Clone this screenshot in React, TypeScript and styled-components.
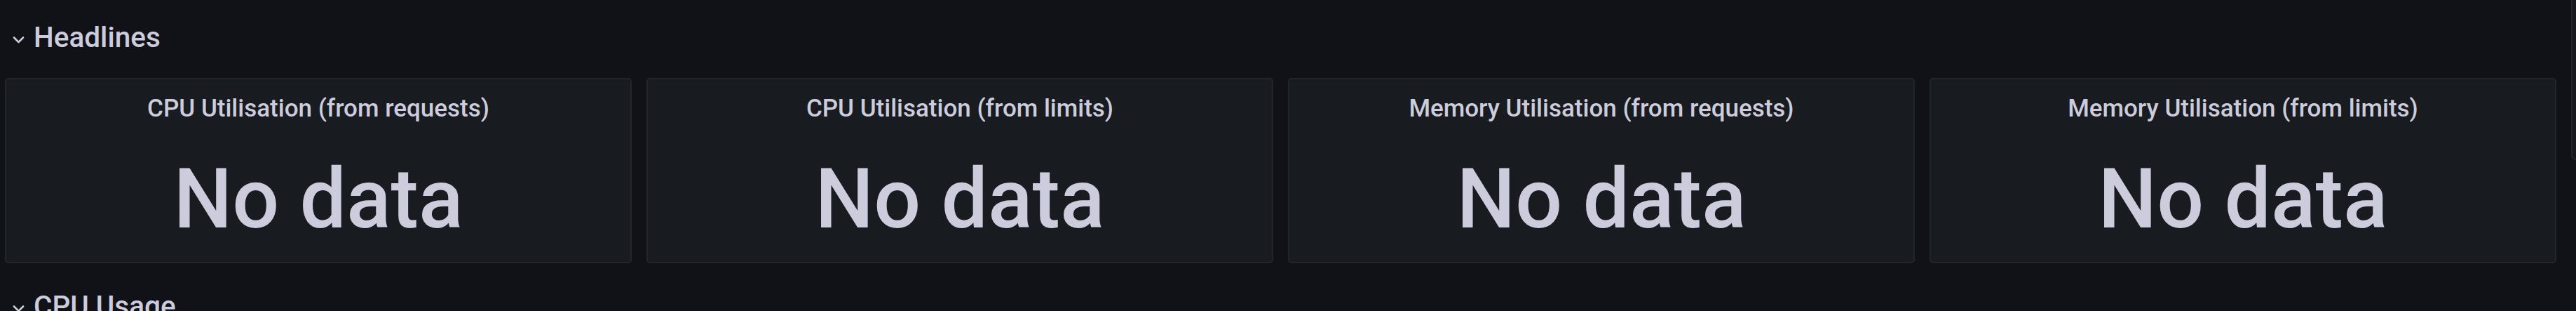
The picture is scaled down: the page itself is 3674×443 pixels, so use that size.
import * as React from "react"
import styled, { createGlobalStyle } from "styled-components"

const GlobalStyle = createGlobalStyle`
    html, body {
        margin: 0;
        padding: 0;
        background: #111217;
    }

    body {
        font-family: Roboto, "Liberation Sans", sans-serif;
        color: #ccccdc;
    }
`

const Page = styled.div`
    position: relative;
    width: 3674px;
    height: 443px;
    overflow: hidden;
    background: #111217;
    padding: 0 28px 0 7px;
    box-sizing: border-box;
`

const ScrollThumb = styled.div`
    position: absolute;
    top: 0;
    right: 0;
    width: 7px;
    height: 228px;
    background: #16181d;
    border-left: 2px solid #23252b;
    border-bottom: 2px solid #23252b;
    border-bottom-left-radius: 7px;
    box-sizing: border-box;
`

const RowHeader = styled.div`
    display: flex;
    align-items: center;
    gap: 13px;
    height: 111px;
    padding: 0 0 5px 11px;
    box-sizing: border-box;
`

const RowTitle = styled.span`
    font-size: 40.5px;
    font-weight: 500;
    line-height: 1;
    white-space: nowrap;
`

const Chevron = styled.svg`
    flex: none;
    width: 17px;
    height: 12px;
    margin-top: 8px;
`

const Grid = styled.div`
    display: grid;
    grid-template-columns: repeat(4, 1fr);
    gap: 21px;
    margin-bottom: 8px;
`

const Panel = styled.div`
    display: flex;
    flex-direction: column;
    height: 264px;
    background: #181b1f;
    border: 2px solid #23252b;
    border-radius: 5px;
    box-sizing: border-box;
`

const PanelHeader = styled.div`
    display: flex;
    align-items: center;
    justify-content: center;
    height: 82px;
    flex: none;
`

const PanelTitle = styled.h2`
    margin: 0;
    font-size: 35px;
    font-weight: 500;
    line-height: 1;
    white-space: nowrap;
`

const PanelBody = styled.div`
    flex: 1;
    display: flex;
    align-items: center;
    justify-content: center;
`

const StatValue = styled.span`
    font-size: 118px;
    font-weight: 500;
    line-height: 1;
    white-space: nowrap;
`

const ChevronDown = () => (
    <Chevron viewBox="0 0 17 12" fill="none">
        <path d="M2 2.5L8.5 9L15 2.5" stroke="#ccccdc" strokeWidth="2.6" strokeLinecap="round" strokeLinejoin="round" />
    </Chevron>
)

const Row = ({ title }: { title: string }) => (
    <RowHeader>
        <ChevronDown />
        <RowTitle>{title}</RowTitle>
    </RowHeader>
)

const panels = [
    "CPU Utilisation (from requests)",
    "CPU Utilisation (from limits)",
    "Memory Utilisation (from requests)",
    "Memory Utilisation (from limits)",
]

export default function App() {
    return (
        <>
            <GlobalStyle />
            <Page>
                <Row title="Headlines" />
                <Grid>
                    {panels.map((title) => (
                        <Panel key={title}>
                            <PanelHeader>
                                <PanelTitle>{title}</PanelTitle>
                            </PanelHeader>
                            <PanelBody>
                                <StatValue>No data</StatValue>
                            </PanelBody>
                        </Panel>
                    ))}
                </Grid>
                <Row title="CPU Usage" />
                <ScrollThumb />
            </Page>
        </>
    )
}
